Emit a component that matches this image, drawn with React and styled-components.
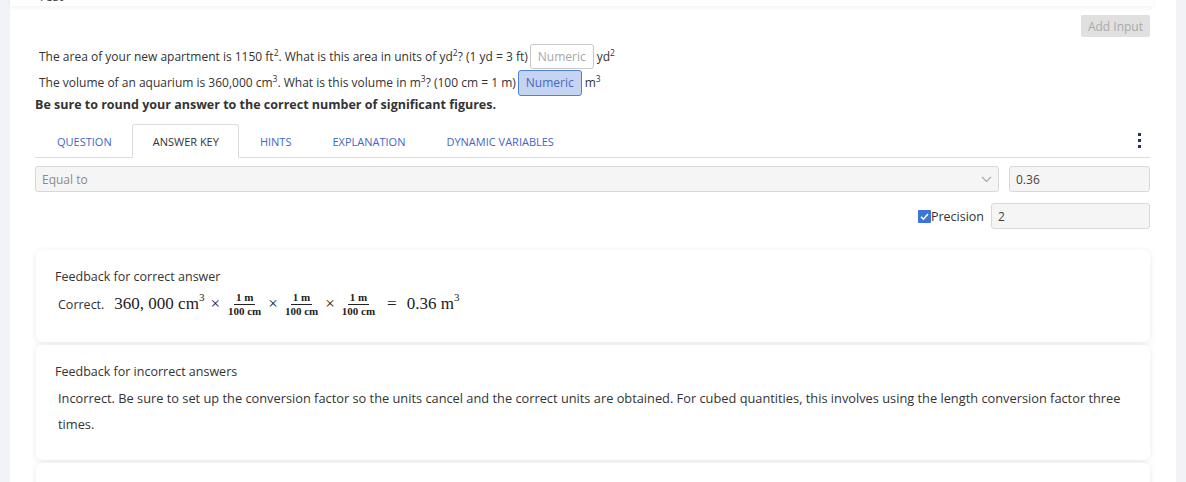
import React from "react";
import styled, { createGlobalStyle } from "styled-components";

const Global = createGlobalStyle`
  html, body { margin: 0; padding: 0; background: #f2f3f7; }
  body { font-family: "Open Sans", "Noto Sans", sans-serif; color: #333; }
  * { box-sizing: border-box; }
`;

const Page = styled.div`
  padding: 0 10px;
  height: 482px;
  overflow: hidden;
`;

const Panel = styled.div`
  display: flow-root;
  background: #fff;
  height: 100%;
  padding: 0 26px 0 25px;
`;

const Header = styled.div`
  height: 18px;
  margin: -12px -3px 0 -25px;
  padding-left: 28px;
  font-size: 13px;
  line-height: 16px;
  box-shadow: 0 2px 4px rgba(0, 0, 0, 0.05);
  color: #444;
`;

const TopBar = styled.div`
  display: flex;
  justify-content: flex-end;
  margin-top: 9px;
`;

const AddButton = styled.button`
  height: 22px;
  padding: 0 7px;
  border: none;
  border-radius: 2px;
  background: #e0e0e0;
  color: #a9a9a9;
  font-family: inherit;
  font-size: 12px;
`;

const Question = styled.div`
  margin-top: 7px;
  padding-left: 4px;
  font-size: 12px;
`;

const QLine = styled.div`
  display: flex;
  align-items: center;
  height: ${(p) => p.$h}px;
  white-space: pre;
`;

const Inline = styled.span`
  sup { font-size: 8.5px; line-height: 0; vertical-align: 5px; }
`;

const NumBox = styled.span`
  display: inline-flex;
  align-items: center;
  height: ${(p) => (p.$active ? 26 : 25)}px;
  margin: 0 3px 0 2px;
  padding: 0 7px;
  border: 1px solid ${(p) => (p.$active ? "#4f7fd8" : "#c8c8c8")};
  border-radius: 3px;
  background: ${(p) => (p.$active ? "#c4d4f1" : "#fff")};
  color: ${(p) => (p.$active ? "#4a67c4" : "#a8a8a8")};
  font-size: 12px;
`;

const Note = styled.div`
  margin-top: 1px;
  font-size: 12.5px;
  font-weight: 700;
  line-height: 16px;
  color: #333;
`;

const Tabs = styled.div`
  display: flex;
  align-items: stretch;
  height: 34px;
  margin-top: 11px;
  border-bottom: 1px solid #dcdcdc;
`;

const Tab = styled.div`
  display: flex;
  align-items: center;
  padding: 0 19px 0 ${(p) => (p.$first ? 21 : 20)}px;
  margin-bottom: -1px;
  font-size: 11px;
  color: ${(p) => (p.$active ? "#333" : "#3f66c9")};
  background: ${(p) => (p.$active ? "#fff" : "transparent")};
  border: 1px solid ${(p) => (p.$active ? "#dcdcdc" : "transparent")};
  border-bottom-color: ${(p) => (p.$active ? "#fff" : "transparent")};
  border-radius: 3px 3px 0 0;
`;

const Spacer = styled.div`
  flex: 1;
`;

const Kebab = styled.div`
  display: flex;
  flex-direction: column;
  justify-content: center;
  gap: 3px;
  padding-right: 9px;
  span {
    width: 3px;
    height: 3px;
    background: #24345a;
  }
`;

const Row = styled.div`
  display: flex;
  align-items: center;
  gap: ${(p) => p.$gap || 10}px;
  justify-content: ${(p) => (p.$end ? "flex-end" : "flex-start")};
  margin-top: ${(p) => p.$mt}px;
`;

const Field = styled.div`
  display: flex;
  align-items: center;
  justify-content: space-between;
  height: 26px;
  width: ${(p) => (p.$w ? `${p.$w}px` : "auto")};
  flex: ${(p) => (p.$w ? "none" : 1)};
  padding: 0 6px;
  background: #f5f5f5;
  border: 1px solid #d8d8d8;
  border-radius: 3px;
  font-size: 12px;
  color: ${(p) => (p.$muted ? "#8a8a8a" : "#444")};
`;

const CheckLabel = styled.label`
  display: flex;
  align-items: center;
  font-size: 12.5px;
  color: #333;
`;

const Card = styled.div`
  margin: ${(p) => p.$mt}px 0 0 1px;
  height: ${(p) => p.$h}px;
  padding: 18px 20px 0 19px;
  background: #fff;
  border-radius: 6px;
  box-shadow: 0 1px 6px rgba(0, 0, 0, 0.09);
`;

const CardTitle = styled.div`
  font-size: 12.5px;
  line-height: 18px;
  color: #333;
`;

const CardBody = styled.div`
  margin-top: ${(p) => p.$mt}px;
  padding-left: 3px;
  font-size: 12.8px;
  line-height: 26px;
  color: #333;
`;

const MathRow = styled.div`
  display: flex;
  align-items: center;
  height: 26px;
  margin-top: 5px;
  padding-left: 3px;
  font-size: 12.5px;
`;

const Math = styled.span`
  display: inline-flex;
  align-items: center;
  margin-left: 10px;
  font-family: "Liberation Serif", "DejaVu Serif", serif;
  font-size: 17px;
  color: #222;
  white-space: pre;
`;

const MathText = styled.span`
  sup { font-size: 11px; line-height: 0; vertical-align: 8px; }
`;

const Op = styled.span`
  margin: 0 ${(p) => p.$m || 5}px;
  font-size: ${(p) => p.$s || 17}px;
`;

const Frac = styled.span`
  display: inline-flex;
  flex-direction: column;
  align-items: center;
  font-size: 11px;
  line-height: 11px;
  font-weight: 700;
  span:first-child {
    padding: 0 2px 1px;
    border-bottom: 1px solid #222;
  }
  span:last-child { padding: 1px 2px 0; }
`;

const Fraction = () => (
  <Frac>
    <span>1 m</span>
    <span>100 cm</span>
  </Frac>
);

export default function App() {
  return (
    <Page>
      <Global />
      <Panel>
        <Header>Test</Header>
        <TopBar>
          <AddButton>Add Input</AddButton>
        </TopBar>
        <Question>
          <QLine $h={25}>
            <Inline>
              The area of your new apartment is 1150 ft<sup>2</sup>. What is this area in units of yd<sup>2</sup>? (1 yd = 3 ft)
            </Inline>
            <NumBox>Numeric</NumBox>
            <Inline>
              yd<sup>2</sup>
            </Inline>
          </QLine>
          <QLine $h={27}>
            <Inline>
              The volume of an aquarium is 360,000 cm<sup>3</sup>. What is this volume in m<sup>3</sup>? (100 cm = 1 m)
            </Inline>
            <NumBox $active>Numeric</NumBox>
            <Inline>
              m<sup>3</sup>
            </Inline>
          </QLine>
        </Question>
        <Note>Be sure to round your answer to the correct number of significant figures.</Note>
        <Tabs>
          <Tab $first>QUESTION</Tab>
          <Tab $active>ANSWER KEY</Tab>
          <Tab>HINTS</Tab>
          <Tab>EXPLANATION</Tab>
          <Tab>DYNAMIC VARIABLES</Tab>
          <Spacer />
          <Kebab>
            <span />
            <span />
            <span />
          </Kebab>
        </Tabs>
        <Row $mt={8}>
          <Field $muted>
            Equal to
            <svg width="11" height="7" viewBox="0 0 11 7">
              <polyline points="1,1 5.5,5.5 10,1" fill="none" stroke="#aaa" strokeWidth="1.2" />
            </svg>
          </Field>
          <Field $w={141}>0.36</Field>
        </Row>
        <Row $mt={11} $end $gap={7}>
          <CheckLabel>
            <svg width="13" height="13" viewBox="0 0 13 13">
              <rect width="13" height="13" rx="1" fill="#3b76d6" />
              <polyline points="3,6.8 5.4,9.2 10,4" fill="none" stroke="#fff" strokeWidth="1.6" />
            </svg>
            Precision
          </CheckLabel>
          <Field $w={159}>2</Field>
        </Row>
        <Card $mt={21} $h={92}>
          <CardTitle>Feedback for correct answer</CardTitle>
          <MathRow>
            Correct.
            <Math>
              <MathText>
                360, 000 cm<sup>3</sup>
              </MathText>
              <Op $m={6}>×</Op>
              <Fraction />
              <Op>×</Op>
              <Fraction />
              <Op>×</Op>
              <Fraction />
              <Op $m={10}>=</Op>
              <MathText>
                0.36 m<sup>3</sup>
              </MathText>
            </Math>
          </MathRow>
        </Card>
        <Card $mt={3} $h={115}>
          <CardTitle>Feedback for incorrect answers</CardTitle>
          <CardBody $mt={4}>
            Incorrect. Be sure to set up the conversion factor so the units cancel and the correct units are obtained. For cubed quantities, this involves using the length conversion factor three times.
          </CardBody>
        </Card>
        <Card $mt={3} $h={60} />
      </Panel>
    </Page>
  );
}
